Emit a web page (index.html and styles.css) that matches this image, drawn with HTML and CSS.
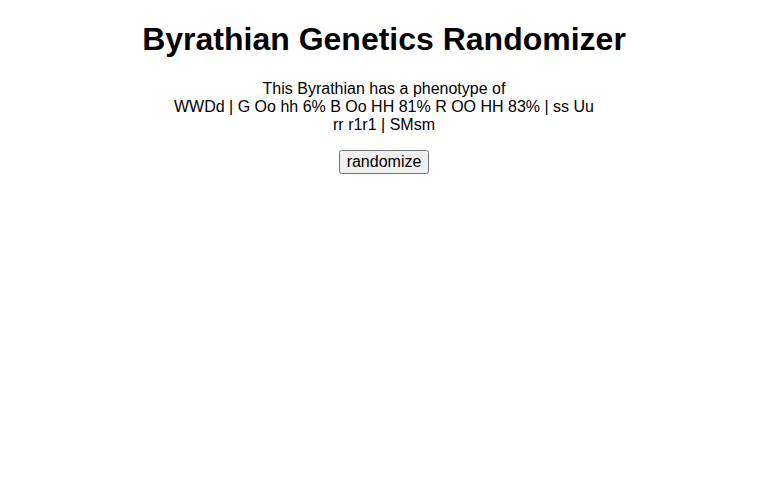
FILE: index.html
```html
<!DOCTYPE html>
<html lang="en">
<head>
  <meta charset="UTF-8">
  <meta name="viewport" content="width=device-width, initial-scale=1.0">
  <title>Byrathian Genetics Randomizer</title>
  <link rel="stylesheet" href="styles.css">
</head>
<body>
  <h1>Byrathian Genetics Randomizer</h1>

  <div id="result">
    <p id="phenotype">This Byrathian has a phenotype of<br>
      <span id="genotype">WWDd | G Oo hh 6% B Oo HH 81% R OO HH 83% | ss Uu rr r1r1 | SMsm</span>
    </p>
  </div>

  <button id="randomize">randomize</button>
</body>
</html>
```

FILE: styles.css
```css
body {
  font-family: 'Liberation Sans', Arial, sans-serif;
  text-align: center;
  color: #000;
  background-color: #fff;
  margin: 0 8px;
}

h1 {
  font-size: 32px;
  margin: 21px 0 22px;
}

#result {
  max-width: 432px;
  margin: 0 auto;
}

#phenotype {
  font-size: 16px;
}

#randomize {
  font-family: 'Liberation Sans', Arial, sans-serif;
  font-size: 16px;
}
```
